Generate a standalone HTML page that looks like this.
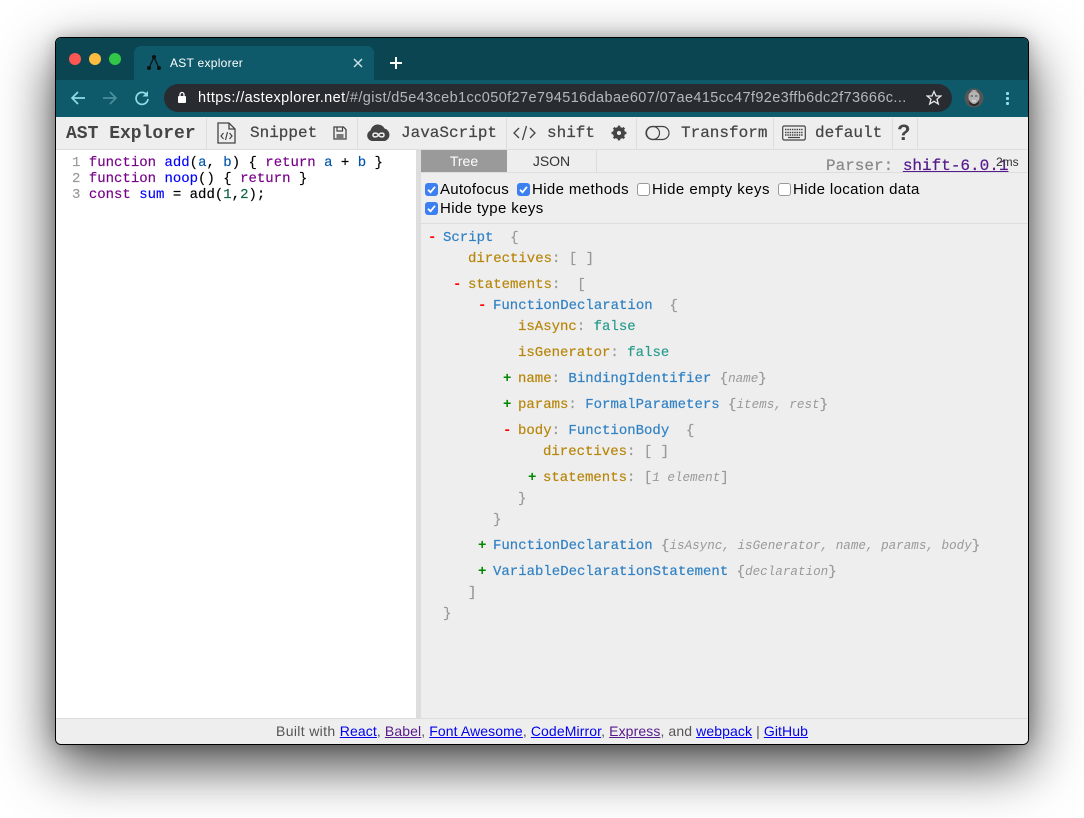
<!DOCTYPE html>
<html><head><meta charset="utf-8"><style>
html,body{margin:0;padding:0;width:1084px;height:818px;overflow:hidden;background:#fff}
*{box-sizing:border-box}
.win{position:absolute;left:55px;top:37px;width:974px;height:708px;border:1px solid #000;border-radius:6px;background:#fff;box-shadow:0 20px 56px 0 rgba(0,0,0,.75),0 0 16px rgba(0,0,0,.2);overflow:hidden}
.a{position:absolute;white-space:pre}
.abs{position:absolute}
.m{font-family:"Liberation Mono",monospace}
.s{font-family:"Liberation Sans",sans-serif}
.tb{font-size:16px;color:#444;line-height:18px;top:124px;-webkit-text-stroke:.2px #444}
.sep{position:absolute;top:118px;width:1px;height:31px;background:#ddd}
.code{font:14px/16px "Liberation Mono",monospace;color:#000;-webkit-text-stroke:.15px}
.n{color:#999}.k{color:#708}.d{color:#00f}.v{color:#05a}.num{color:#164}
.l{position:absolute;font:14px/16px "Liberation Mono",monospace;white-space:pre;color:#999;-webkit-text-stroke:.2px}
.p{color:#b8860b}.t{color:#3182c4}.b{color:#2a9d8f}
.mi{position:absolute;font:bold 14px/16px "Liberation Mono",monospace;color:#f00}
.pl{position:absolute;font:bold 14px/16px "Liberation Mono",monospace;color:#080}
i{font-size:12.6px;color:#999;-webkit-text-stroke:0}
.cb{position:absolute;width:13px;height:13px;border-radius:3px}
.on{background:#3b7ff0}
.off{background:#fff;border:1px solid #999}
.cl{position:absolute;font:15px/18px "Liberation Sans",sans-serif;color:#000;white-space:pre;letter-spacing:.37px}
a{color:#00e;text-decoration:underline}
a.vis{color:#551a8b}
</style></head><body>
<div class="win"></div>

<div class="abs" style="left:56px;top:38px;width:972px;height:43px;background:#0a4551;border-radius:5px 5px 0 0"></div>
<div class="abs" style="left:56px;top:80px;width:972px;height:37px;background:#0e5a6b"></div>
<div class="abs" style="left:134px;top:46px;width:240px;height:34px;background:#0e5a6b;border-radius:7px 7px 0 0"></div>
<div class="abs" style="left:69px;top:53px;width:12px;height:12px;border-radius:50%;background:#fc5753"></div>
<div class="abs" style="left:89px;top:53px;width:12px;height:12px;border-radius:50%;background:#fdbc40"></div>
<div class="abs" style="left:109px;top:53px;width:12px;height:12px;border-radius:50%;background:#33c748"></div>
<svg class="abs" style="left:146px;top:54px" width="16" height="18" viewBox="0 0 16 18"><path d="M8 3L3 14M8 3L13 14" stroke="#111" stroke-width="1.300" fill="none"/><circle cx="8" cy="3" r="2" fill="#111"/><circle cx="3" cy="14" r="2" fill="#111"/><circle cx="13" cy="14" r="2" fill="#111"/></svg>
<div class="a s" style="left:170px;top:55px;font-size:12px;line-height:16px;color:#fff;letter-spacing:.27px">AST explorer</div>
<svg class="abs" style="left:353px;top:58px" width="10" height="10"><path d="M1 1L9 9M9 1L1 9" stroke="#cfe3e8" stroke-width="1.400"/></svg>
<svg class="abs" style="left:389px;top:56px" width="14" height="14"><path d="M7 1V13M1 7H13" stroke="#fff" stroke-width="2"/></svg>

<svg class="abs" style="left:70px;top:90px" width="16" height="16" viewBox="0 0 16 16"><path d="M15 8H2M8 2L2 8L8 14" stroke="#8fdde6" stroke-width="1.700" fill="none"/></svg>
<svg class="abs" style="left:102px;top:90px" width="16" height="16" viewBox="0 0 16 16"><path d="M1 8H14M8 2L14 8L8 14" stroke="#4a8f9c" stroke-width="1.700" fill="none"/></svg>
<svg class="abs" style="left:134px;top:90px" width="16" height="16" viewBox="0 0 16 16"><path d="M13 5A6 6 0 1 0 14 9" stroke="#8fdde6" stroke-width="1.700" fill="none"/><path d="M14 1V6.500H8.500Z" fill="#8fdde6"/></svg>

<div class="abs" style="left:164px;top:84px;width:788px;height:28px;background:#282c30;border-radius:14px"></div>
<svg class="abs" style="left:177px;top:91px" width="10" height="13" viewBox="0 0 10 13"><rect x="1" y="5" width="8" height="7" rx="1" fill="#fff"/><path d="M3 5V3.500a2 2 0 0 1 4 0V5" stroke="#fff" stroke-width="1.300" fill="none"/></svg>
<div class="a s" style="left:198px;top:89px;font-size:14.5px;line-height:18px;color:#b5b8bb;letter-spacing:.385px"><span style="color:#fff">https://astexplorer.net</span>/#/gist/d5e43ceb1cc050f27e794516dabae607/07ae415cc47f92e3ffb6dc2f73666c...</div>
<svg class="abs" style="left:926px;top:90px" width="16" height="16" viewBox="0 0 16 16"><path d="M8 1.500L10 6H14.800L11 9.200L12.300 14L8 11.300L3.700 14L5 9.200L1.200 6H6Z" stroke="#e6e8ea" stroke-width="1.300" fill="none"/></svg>
<svg class="abs" style="left:964px;top:88px" width="20" height="20" viewBox="0 0 20 20"><circle cx="10" cy="10" r="9.500" fill="#555"/><ellipse cx="10" cy="9" rx="5.500" ry="7" fill="#b4b4b4"/><path d="M4.500 6Q10 0 15.500 6L14.500 4Q10 2 5.500 4Z" fill="#333"/><path d="M5 12Q10 20 15 12L14.500 16Q10 20 5.500 16Z" fill="#2a2a2a"/><path d="M6.500 8H9M11 8H13.500" stroke="#444" stroke-width="1"/><path d="M8 13H12" stroke="#eee" stroke-width="1"/></svg>
<div class="abs" style="left:1005.500px;top:92px;width:3px;height:3px;background:#8fdde6;box-shadow:0 5px 0 #8fdde6,0 10px 0 #8fdde6;border-radius:1px"></div>

<div class="abs" style="left:56px;top:117px;width:972px;height:33px;background:#eee;border-bottom:1px solid #ddd"></div>
<div class="a m" style="left:66px;top:124px;font-size:18px;line-height:20px;font-weight:bold;color:#444">AST Explorer</div>
<div class="sep" style="left:206px"></div><div class="sep" style="left:357px"></div><div class="sep" style="left:506px"></div><div class="sep" style="left:636px"></div><div class="sep" style="left:773px"></div><div class="sep" style="left:892px"></div><div class="sep" style="left:917px"></div>

<svg class="abs" style="left:217px;top:122px" width="19" height="22" viewBox="0 0 19 22"><path d="M1 1H12L18 7V21H1Z" stroke="#444" stroke-width="1.300" fill="none"/><path d="M12 1V7H18" stroke="#444" stroke-width="1.300" fill="none"/><path d="M6.500 11L4 14L6.500 17M12.500 11L15 14L12.500 17M10.500 10L8.500 18" stroke="#444" stroke-width="1.200" fill="none"/></svg>
<div class="a m tb" style="left:250px">Snippet</div>
<svg class="abs" style="left:333px;top:126px" width="14" height="14" viewBox="0 0 14 14"><path d="M1 1H10.500L13 3.500V13H1Z" stroke="#444" stroke-width="1.300" fill="#eee"/><path d="M4 1V5H9.500V1" stroke="#444" stroke-width="1.200" fill="none"/><rect x="3.500" y="8" width="7" height="5" fill="#777"/></svg>
<svg class="abs" style="left:366px;top:122px" width="25" height="20" viewBox="0 0 25 20"><path d="M6 19A5.500 5.500 0 0 1 4.500 8.500A7.500 7.500 0 0 1 18.500 6.500A6.500 6.500 0 0 1 19 19Z" fill="#444"/><path d="M12.500 13C11 10.500 7 10.500 7 13S11 15.500 12.500 13C14 10.500 18 10.500 18 13S14 15.500 12.500 13Z" stroke="#eee" stroke-width="1.500" fill="none"/></svg>
<div class="a m tb" style="left:401px">JavaScript</div>
<svg class="abs" style="left:513px;top:125px" width="23" height="16" viewBox="0 0 23 16"><path d="M6 3L1 8L6 13M17 3L22 8L17 13M13.500 1L9.500 15" stroke="#444" stroke-width="1.300" fill="none"/></svg>
<div class="a m tb" style="left:547px">shift</div>
<svg class="abs" style="left:611px;top:125px" width="16" height="16" viewBox="0 0 14 14"><circle cx="7" cy="7" r="3.800" stroke="#444" stroke-width="3" fill="none"/><path d="M7 .500V13.500M.500 7H13.500M2.400 2.400L11.600 11.600M11.600 2.400L2.400 11.600" stroke="#444" stroke-width="2.200"/><circle cx="7" cy="7" r="2.300" fill="#444"/><circle cx="7" cy="7" r="1.800" fill="#eee"/></svg>
<svg class="abs" style="left:645px;top:125px" width="25" height="16" viewBox="0 0 25 16"><rect x="1" y="1.500" width="23" height="13" rx="6.500" stroke="#444" stroke-width="1.200" fill="none"/><circle cx="8" cy="8" r="6.500" stroke="#444" stroke-width="1.200" fill="none"/></svg>
<div class="a m tb" style="left:681px">Transform</div>
<svg class="abs" style="left:782px;top:125px" width="24" height="16" viewBox="0 0 24 16"><rect x=".7" y="1" width="22.600" height="14" rx="1.500" stroke="#444" stroke-width="1.200" fill="none"/><path d="M3 4.500H21M3 7.500H21M3 10H21" stroke="#444" stroke-width="1.400" stroke-dasharray="1.500 .8"/><path d="M6 12.500H18" stroke="#444" stroke-width="1.200"/></svg>
<div class="a m tb" style="left:815px">default</div>
<div class="a s" style="left:897px;top:121px;font-size:22px;line-height:24px;font-weight:bold;color:#444">?</div>

<div class="code a" style="left:72px;top:155px"><span class="n">1</span> <span class="k">function</span> <span class="d">add</span>(<span class="v">a</span>, <span class="v">b</span>) { <span class="k">return</span> <span class="v">a</span> + <span class="v">b</span> }</div>
<div class="code a" style="left:72px;top:171px"><span class="n">2</span> <span class="k">function</span> <span class="d">noop</span>() { <span class="k">return</span> }</div>
<div class="code a" style="left:72px;top:187px"><span class="n">3</span> <span class="k">const</span> <span class="d">sum</span> = add(<span class="num">1</span>,<span class="num">2</span>);</div>

<div class="abs" style="left:416px;top:150px;width:5px;height:568px;background:#ddd"></div>
<div class="abs" style="left:421px;top:150px;width:607px;height:568px;background:#eee"></div>
<div class="abs" style="left:421px;top:172px;width:607px;height:1px;background:#ddd"></div>
<div class="abs" style="left:421px;top:223px;width:607px;height:1px;background:#ddd"></div>
<div class="abs s" style="left:421px;top:150px;width:86px;height:22px;background:#9a9a9a;color:#fff;font-size:14px;line-height:22px;text-align:center">Tree</div>
<div class="abs s" style="left:507px;top:150px;width:90px;height:22px;border-right:1px solid #ddd;color:#333;font-size:14px;line-height:22px;text-align:center">JSON</div>
<div class="a m" style="left:826px;top:157px;font-size:16px;line-height:18px;color:#888;-webkit-text-stroke:.2px">Parser: <a class="vis">shift-6.0.1</a></div>
<div class="a s" style="left:996px;top:155px;font-size:12px;line-height:14px;color:#333">2ms</div>

<svg width="0" height="0" style="position:absolute"><symbol id="ck" viewBox="0 0 13 13"><path d="M3 6.800L5.500 9.300L10 3.800" stroke="#fff" stroke-width="1.800" fill="none"/></symbol></svg>
<div class="cb on" style="left:425px;top:183px"><svg width="13" height="13"><use href="#ck"/></svg></div>
<div class="cl" style="left:440px;top:181px;letter-spacing:.25px">Autofocus</div>
<div class="cb on" style="left:517px;top:183px"><svg width="13" height="13"><use href="#ck"/></svg></div>
<div class="cl" style="left:532px;top:181px">Hide methods</div>
<div class="cb off" style="left:637px;top:183px"></div>
<div class="cl" style="left:652px;top:181px;letter-spacing:.47px">Hide empty keys</div>
<div class="cb off" style="left:778px;top:183px"></div>
<div class="cl" style="left:793px;top:181px">Hide location data</div>
<div class="cb on" style="left:425px;top:202px"><svg width="13" height="13"><use href="#ck"/></svg></div>
<div class="cl" style="left:440px;top:200px">Hide type keys</div>

<div class="mi" style="left:428px;top:230px">-</div><div class="l" style="left:443px;top:230px"><span class="t">Script</span>  {</div>
<div class="l" style="left:468px;top:251px"><span class="p">directives</span>: [ ]</div>
<div class="mi" style="left:453px;top:277px">-</div><div class="l" style="left:468px;top:277px"><span class="p">statements</span>:  [</div>
<div class="mi" style="left:478px;top:298px">-</div><div class="l" style="left:493px;top:298px"><span class="t">FunctionDeclaration</span>  {</div>
<div class="l" style="left:518px;top:319px"><span class="p">isAsync</span>: <span class="b">false</span></div>
<div class="l" style="left:518px;top:345px"><span class="p">isGenerator</span>: <span class="b">false</span></div>
<div class="pl" style="left:503px;top:371px">+</div><div class="l" style="left:518px;top:371px"><span class="p">name</span>: <span class="t">BindingIdentifier</span> {<i>name</i>}</div>
<div class="pl" style="left:503px;top:397px">+</div><div class="l" style="left:518px;top:397px"><span class="p">params</span>: <span class="t">FormalParameters</span> {<i>items, rest</i>}</div>
<div class="mi" style="left:503px;top:423px">-</div><div class="l" style="left:518px;top:423px"><span class="p">body</span>: <span class="t">FunctionBody</span>  {</div>
<div class="l" style="left:543px;top:444px"><span class="p">directives</span>: [ ]</div>
<div class="pl" style="left:528px;top:470px">+</div><div class="l" style="left:543px;top:470px"><span class="p">statements</span>: [<i>1 element</i>]</div>
<div class="l" style="left:518px;top:491px">}</div>
<div class="l" style="left:493px;top:512px">}</div>
<div class="pl" style="left:478px;top:538px">+</div><div class="l" style="left:493px;top:538px"><span class="t">FunctionDeclaration</span> {<i>isAsync, isGenerator, name, params, body</i>}</div>
<div class="pl" style="left:478px;top:564px">+</div><div class="l" style="left:493px;top:564px"><span class="t">VariableDeclarationStatement</span> {<i>declaration</i>}</div>
<div class="l" style="left:468px;top:585px">]</div>
<div class="l" style="left:443px;top:606px">}</div>

<div class="abs" style="left:56px;top:718px;width:972px;height:26px;background:#eee;border-top:1px solid #ddd;border-radius:0 0 5px 5px"></div>
<div class="a s" style="left:276px;top:723px;font-size:14px;line-height:17px;color:#555;letter-spacing:.105px"><span style="letter-spacing:.35px">Built with </span><a>React</a>, <a class="vis">Babel</a>, <a>Font Awesome</a>, <a>CodeMirror</a>, <a class="vis">Express</a>, and <a>webpack</a> | <a>GitHub</a></div>
</body></html>
